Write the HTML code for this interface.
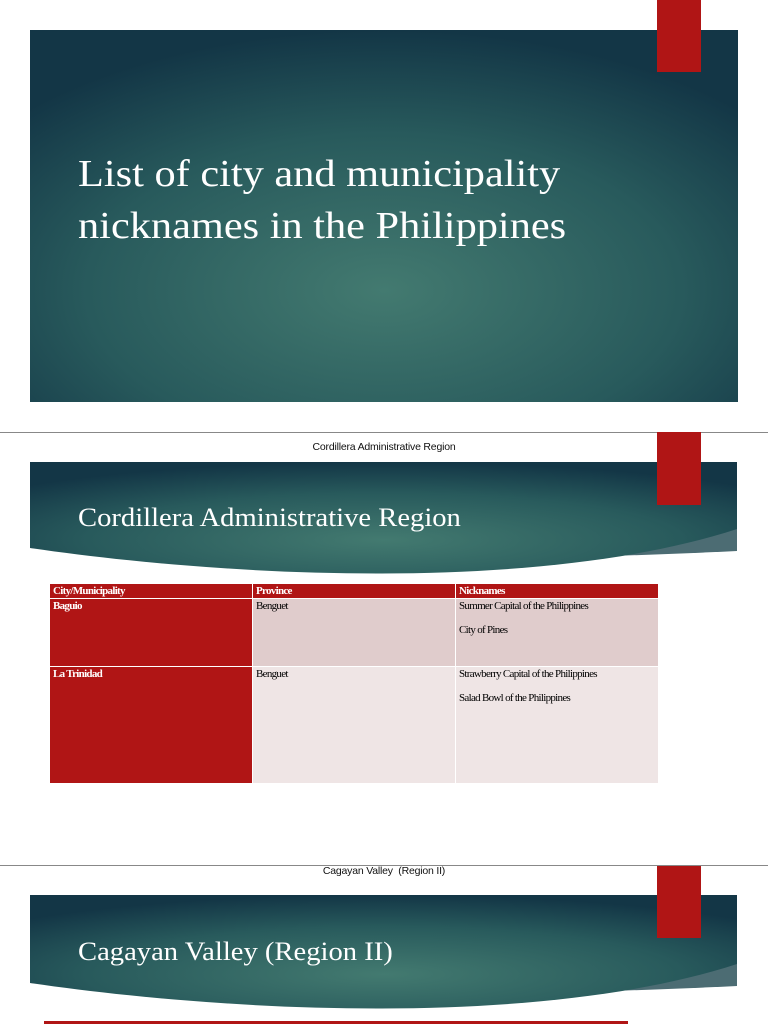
<!DOCTYPE html>
<html><head><style>
body{margin:0;width:768px;height:1024px;overflow:hidden;background:#fff;position:relative;font-family:"Liberation Serif",serif}
.abs{position:absolute}
.red{background:#b01515;width:44px}
.hl{height:1px;background:#888;left:0;width:768px}
.cap{font-family:"Liberation Sans",sans-serif;font-size:10.5px;width:768px;text-align:center;color:#111;letter-spacing:-0.2px}
.st{transform:scaleX(1.10);transform-origin:left top;white-space:nowrap}
table{border-collapse:collapse;font-size:11px;letter-spacing:-0.7px;font-family:"Liberation Serif",serif}
td{vertical-align:top;padding:1px 3px;border:1px solid #fff;line-height:12px}
</style></head><body>
<svg class="abs" style="left:0;top:0" width="768" height="1024">
<defs>
<radialGradient id="g" cx="0.5" cy="0.7" r="0.7">
<stop offset="0" stop-color="#437a70"/><stop offset="0.6" stop-color="#285a5c"/><stop offset="1" stop-color="#133646"/></radialGradient>
</defs>
<rect x="30" y="30" width="708" height="372" fill="url(#g)"/>
<path d="M30,462 H737 V551 C550,560 300,565 30,548Z" fill="#4c6c73"/>
<path d="M30,462 H737 V529 C550,590 250,580 30,548Z" fill="url(#g)"/>
<path d="M30,895 H737 V986 C550,995 300,1000 30,983Z" fill="#4c6c73"/>
<path d="M30,895 H737 V964 C550,1025 250,1015 30,983Z" fill="url(#g)"/>
</svg>
<div class="abs red" style="left:657px;top:0;height:72px"></div>
<div class="abs st" style="left:78px;top:148px;color:#fff;font-size:38.5px;line-height:52px">List of city and municipality<br>nicknames in the Philippines</div>
<div class="abs hl" style="top:432px"></div>
<div class="abs cap" style="top:441px">Cordillera Administrative Region</div>
<div class="abs red" style="left:657px;top:432px;height:73px"></div>
<div class="abs st" style="left:78px;top:503px;color:#fff;font-size:26px">Cordillera Administrative Region</div>
<table class="abs" style="left:49px;top:583px;width:610px">
<tr style="background:#b01515;color:#fff;height:14px;font-weight:bold"><td style="width:196px">City/Municipality</td><td style="width:196px">Province</td><td>Nicknames</td></tr>
<tr style="height:68px"><td style="background:#b01515;color:#fff;font-weight:bold">Baguio</td><td style="background:#e0cccc">Benguet</td><td style="background:#e0cccc">Summer Capital of the Philippines<br><br>City of Pines</td></tr>
<tr style="height:117px"><td style="background:#b01515;color:#fff;font-weight:bold">La Trinidad</td><td style="background:#efe5e5">Benguet</td><td style="background:#efe5e5">Strawberry Capital of the Philippines<br><br>Salad Bowl of the Philippines</td></tr>
</table>
<div class="abs hl" style="top:865px"></div>
<div class="abs cap" style="top:865px">Cagayan Valley &nbsp;(Region II)</div>
<div class="abs red" style="left:657px;top:866px;height:72px"></div>
<div class="abs st" style="left:78px;top:937px;color:#fff;font-size:26px">Cagayan Valley (Region II)</div>
<div class="abs" style="left:44px;top:1021px;width:584px;height:3px;background:#b01515"></div>
</body></html>
